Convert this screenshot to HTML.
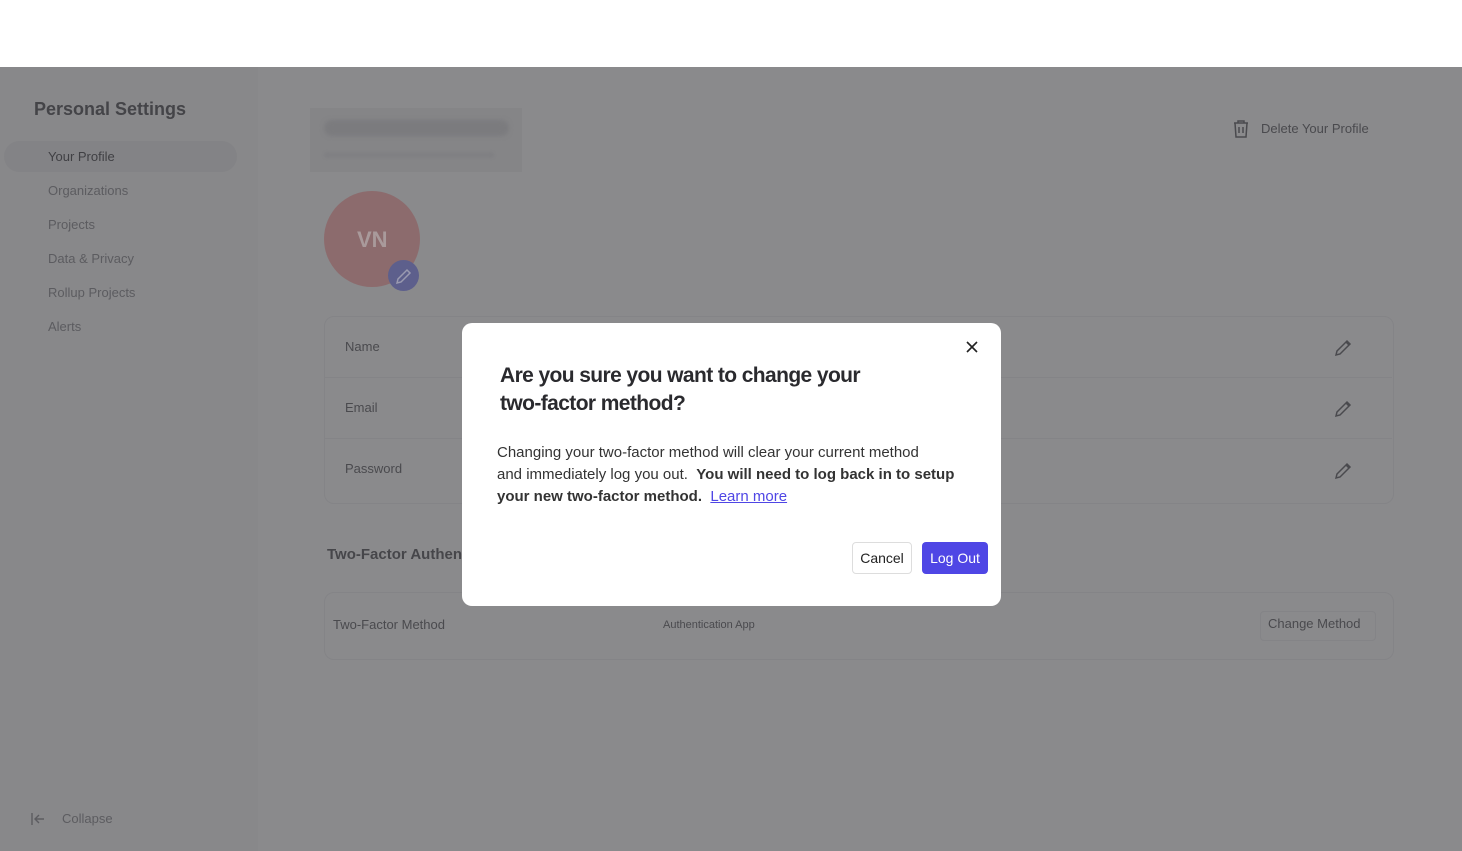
<!DOCTYPE html>
<html><head><style>
body{margin:0;width:1462px;height:851px;position:relative;overflow:hidden;font-family:"Liberation Sans",sans-serif;background:#fff}
.ov{position:absolute;left:0;top:67px;width:1462px;height:784px;background:#8a8a8c}
.t{position:absolute;white-space:nowrap;color:#4a4a4e}
.card{position:absolute;border:1px solid #848487;border-radius:10px}
.hr{position:absolute;height:1px;background:#848487}
svg{position:absolute}
</style></head><body>
<div class="ov"></div>
<div style="position:absolute;left:0;top:67px;width:258px;height:784px;background:#88888a"></div>
<div class="t" style="left:34px;top:99px;font-size:18px;font-weight:bold;color:#444448">Personal Settings</div>
<div style="position:absolute;left:4px;top:141px;width:233px;height:31px;border-radius:16px;background:#838386"></div>
<div class="t" style="left:48px;top:149px;font-size:13px;color:#404044">Your Profile</div>
<div class="t" style="left:48px;top:183px;font-size:13px;color:#5c5c60">Organizations</div>
<div class="t" style="left:48px;top:217px;font-size:13px;color:#5c5c60">Projects</div>
<div class="t" style="left:48px;top:251px;font-size:13px;color:#5c5c60">Data &amp; Privacy</div>
<div class="t" style="left:48px;top:285px;font-size:13px;color:#5c5c60">Rollup Projects</div>
<div class="t" style="left:48px;top:319px;font-size:13px;color:#5c5c60">Alerts</div>
<svg style="left:30px;top:812px" width="16" height="14" viewBox="0 0 16 14"><path d="M2 1v12M14 7H5M9 3L5 7l4 4" fill="none" stroke="#5c5c60" stroke-width="1.4"/></svg>
<div class="t" style="left:62px;top:811px;font-size:13px;color:#5c5c60">Collapse</div>
<div style="position:absolute;left:310px;top:108px;width:212px;height:64px;background:#858587"></div>
<div style="position:absolute;left:324px;top:120px;width:185px;height:16px;border-radius:8px;background:#7b7b7e;filter:blur(2px)"></div>
<div style="position:absolute;left:324px;top:152px;width:170px;height:6px;border-radius:3px;background:#808083;filter:blur(1px)"></div>
<div style="position:absolute;left:324px;top:191px;width:96px;height:96px;border-radius:50%;background:#8c6b6d"></div>
<div class="t" style="left:357px;top:227px;font-size:22px;font-weight:bold;color:#a99a9b">VN</div>
<div style="position:absolute;left:388px;top:260px;width:31px;height:31px;border-radius:50%;background:#5d5f8c"></div>
<svg style="left:394px;top:266px" width="20" height="20" viewBox="0 0 20 20"><path d="M3 17l1-4 9-9 3 3-9 9z" fill="none" stroke="#9a9ab0" stroke-width="1.5"/></svg>
<svg style="left:1232px;top:119px" width="18" height="19" viewBox="0 0 18 19"><path d="M2 4h14M6 4V2h6v2M3 4l1 14h10l1-14M7 8v6M11 8v6" fill="none" stroke="#4a4a4e" stroke-width="1.5"/></svg>
<div class="t" style="left:1261px;top:121px;font-size:13px;color:#4a4a4e">Delete Your Profile</div>
<div class="card" style="left:324px;top:316px;width:1068px;height:186px"></div>
<div class="hr" style="left:325px;top:377px;width:1067px"></div>
<div class="hr" style="left:325px;top:438px;width:1067px"></div>
<div class="t" style="left:345px;top:339px;font-size:13px">Name</div>
<div class="t" style="left:345px;top:400px;font-size:13px">Email</div>
<div class="t" style="left:345px;top:461px;font-size:13px">Password</div>
<svg style="left:1334px;top:337px" width="20" height="20" viewBox="0 0 20 20"><path d="M2 18l1-4 10-10 3 3-10 10zM12 5l3 3" fill="none" stroke="#4a4a4e" stroke-width="1.5"/></svg>
<svg style="left:1334px;top:398px" width="20" height="20" viewBox="0 0 20 20"><path d="M2 18l1-4 10-10 3 3-10 10zM12 5l3 3" fill="none" stroke="#4a4a4e" stroke-width="1.5"/></svg>
<svg style="left:1334px;top:460px" width="20" height="20" viewBox="0 0 20 20"><path d="M2 18l1-4 10-10 3 3-10 10zM12 5l3 3" fill="none" stroke="#4a4a4e" stroke-width="1.5"/></svg>
<div class="t" style="left:327px;top:546px;font-size:15px;font-weight:bold;color:#46464a">Two-Factor Authentication</div>
<div class="card" style="left:324px;top:592px;width:1068px;height:66px"></div>
<div class="t" style="left:333px;top:617px;font-size:13px">Two-Factor Method</div>
<div class="t" style="left:663px;top:619px;font-size:11px">Authentication App</div>
<div style="position:absolute;left:1260px;top:611px;width:114px;height:28px;border:1px solid #848487;border-radius:4px"></div>
<div class="t" style="left:1268px;top:616px;font-size:13px">Change Method</div>
<div style="position:absolute;left:462px;top:323px;width:539px;height:283px;background:#fff;border-radius:10px"></div>
<svg style="left:965px;top:340px" width="14" height="14" viewBox="0 0 14 14"><path d="M2 2l10 10M12 2L2 12" stroke="#222" stroke-width="1.6"/></svg>
<div style="position:absolute;left:500px;top:362px;font-size:21px;font-weight:bold;color:#2a2a2e;line-height:28px;letter-spacing:-0.6px">Are you sure you want to change your<br>two-factor method?</div>
<div style="position:absolute;left:497px;top:442px;white-space:nowrap;font-size:15px;color:#333;line-height:22px">Changing your two-factor method will clear your current method<br>and immediately log you out.&nbsp; <b>You will need to log back in to setup</b><br><b>your new two-factor method.</b>&nbsp; <span style="color:#4f46e5;text-decoration:underline">Learn more</span></div>
<div style="position:absolute;left:852px;top:542px;width:58px;height:30px;border:1px solid #ddd;border-radius:4px;font-size:14px;line-height:30px;text-align:center;color:#222">Cancel</div>
<div style="position:absolute;left:922px;top:542px;width:66px;height:32px;background:#4f46e5;border-radius:4px;font-size:14px;line-height:32px;text-align:center;color:#fff">Log Out</div>
</body></html>
